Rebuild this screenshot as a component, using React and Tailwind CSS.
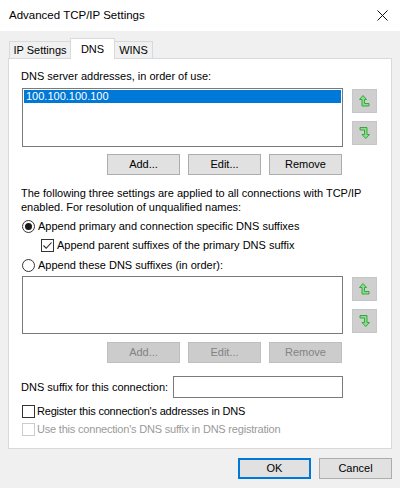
import React from "react";

const font = { fontFamily: "'Segoe UI', 'Liberation Sans', Arial, sans-serif" };

function Btn({ children, disabled, primary, className = "" }) {
  const base = "h-[21px] w-[73px] flex items-center justify-center border";
  const look = disabled
    ? "border-[#bfbfbf] bg-[#cccccc] text-[#838383]"
    : primary
    ? "border-2 border-[#0078d7] bg-[#e1e1e1] text-black"
    : "border-[#adadad] bg-[#e1e1e1] text-black";
  return <div className={`${base} ${look} ${className}`}>{children}</div>;
}

function UpArrow() {
  return (
    <svg width="11" height="12" viewBox="0 0 11 12">
      <polygon
        points="4,0.5 7.5,4.5 5.5,4.5 5.5,8.5 10,8.5 10,11 3,11 3,4.5 0.5,4.5"
        fill="#86e086"
        stroke="#2f9e3a"
        strokeWidth="0.9"
        strokeLinejoin="miter"
      />
    </svg>
  );
}

function DownArrow() {
  return (
    <svg width="11" height="12" viewBox="0 0 11 12">
      <polygon
        points="1,0.5 8,0.5 8,7.5 10.5,7.5 6.75,11.5 3,7.5 5.5,7.5 5.5,3 1,3"
        fill="#86e086"
        stroke="#2f9e3a"
        strokeWidth="0.9"
        strokeLinejoin="miter"
      />
    </svg>
  );
}

function ArrowBtns({ top = 1 }) {
  return (
    <div className="flex flex-col gap-[8px] ml-[9px]" style={{ marginTop: top }}>
      <div className="w-[25px] h-[24px] bg-[#cfcfcf] border border-[#c6c6c6] flex items-center justify-center">
        <UpArrow />
      </div>
      <div className="w-[25px] h-[24px] bg-[#cfcfcf] border border-[#c6c6c6] flex items-center justify-center">
        <DownArrow />
      </div>
    </div>
  );
}

function Radio({ checked }) {
  return (
    <div className="w-[13px] h-[13px] rounded-full border border-[#333333] bg-white flex items-center justify-center shrink-0">
      {checked && <div className="w-[7px] h-[7px] rounded-full bg-[#1a1a1a]" />}
    </div>
  );
}

function Check({ checked, disabled }) {
  return (
    <div
      className={`w-[13px] h-[13px] border bg-white flex items-center justify-center shrink-0 ${
        disabled ? "border-[#cccccc]" : "border-[#333333]"
      }`}
    >
      {checked && (
        <svg width="11" height="11" viewBox="0 0 11 11">
          <path d="M1.5 5.5 L4.2 8.3 L9.5 2.5" fill="none" stroke="#222" strokeWidth="1.1" />
        </svg>
      )}
    </div>
  );
}

export default function App() {
  return (
    <div className="w-[400px] h-[488px] bg-[#f0f0f0] text-[11px] text-black flex flex-col overflow-hidden" style={font}>
      <div className="h-[31px] bg-white flex items-center justify-between pl-[9px] pr-[12px]">
        <span className="text-[11.5px] text-black">Advanced TCP/IP Settings</span>
        <svg width="11" height="11" viewBox="0 0 11 11">
          <path d="M0.5 0.5 L10.5 10.5 M10.5 0.5 L0.5 10.5" stroke="#111" strokeWidth="1" />
        </svg>
      </div>

      <div className="mx-[8px] mt-[7px]">
        <div className="flex items-end h-[20px] pl-px">
          <div className="h-[17px] w-[62px] border border-b-0 border-[#d9d9d9] bg-[#f0f0f0] flex items-center justify-center">
            IP Settings
          </div>
          <div className="relative z-10 -mb-px h-[21px] w-[45px] -ml-px border border-b-0 border-[#d9d9d9] bg-white flex justify-center pt-[2px]">
            DNS
          </div>
          <div className="h-[17px] w-[39px] -ml-px border border-b-0 border-[#d9d9d9] bg-[#f0f0f0] flex items-center justify-center">
            WINS
          </div>
        </div>

        <div className="h-[391px] border border-[#d9d9d9] bg-white pl-[12px] flex flex-col">
          <div className="mt-[10px] h-[15px] flex items-center">DNS server addresses, in order of use:</div>

          <div className="flex mt-[4px]">
            <div className="ml-px w-[321px] h-[59px] border border-[#7a7a7a] bg-white p-px">
              <div className="h-[13px] bg-[#0078d7] text-white flex items-center pl-[2px]">100.100.100.100</div>
            </div>
            <ArrowBtns top={1} />
          </div>

          <div className="ml-px w-[320px] flex justify-end gap-[8px] mt-[7px]">
            <Btn>Add...</Btn>
            <Btn>Edit...</Btn>
            <Btn>Remove</Btn>
          </div>

          <div className="mt-[11px] leading-[14px]">
            <div>The following three settings are applied to all connections with TCP/IP</div>
            <div>enabled. For resolution of unqualified names:</div>
          </div>

          <div className="mt-[4px] h-[16px] flex items-center gap-[3px] ml-px">
            <Radio checked />
            <span>Append primary and connection specific DNS suffixes</span>
          </div>
          <div className="mt-[3px] h-[16px] flex items-center gap-[3px] ml-[20px]">
            <Check checked />
            <span>Append parent suffixes of the primary DNS suffix</span>
          </div>
          <div className="mt-[4px] h-[16px] flex items-center gap-[3px] ml-px">
            <Radio />
            <span>Append these DNS suffixes (in order):</span>
          </div>

          <div className="flex mt-[3px]">
            <div className="ml-px w-[321px] h-[58px] border border-[#7a7a7a] bg-white" />
            <ArrowBtns top={1} />
          </div>

          <div className="ml-px w-[320px] flex justify-end gap-[8px] mt-[8px]">
            <Btn disabled>Add...</Btn>
            <Btn disabled>Edit...</Btn>
            <Btn disabled>Remove</Btn>
          </div>

          <div className="mt-[13px] flex items-center">
            <span className="w-[152px]">DNS suffix for this connection:</span>
            <div className="w-[170px] h-[22px] border border-[#7a7a7a] bg-white" />
          </div>

          <div className="mt-[5px] h-[16px] flex items-center gap-[2px] ml-px">
            <Check />
            <span className="tracking-[-0.2px]">Register this connection's addresses in DNS</span>
          </div>
          <div className="mt-[2px] h-[16px] flex items-center gap-[2px] ml-px text-[#9a9a9a]">
            <Check disabled />
            <span className="tracking-[-0.2px]">Use this connection's DNS suffix in DNS registration</span>
          </div>
        </div>
      </div>

      <div className="flex justify-end gap-[8px] mt-[9px] mr-[8px]">
        <Btn primary>OK</Btn>
        <Btn>Cancel</Btn>
      </div>
    </div>
  );
}
